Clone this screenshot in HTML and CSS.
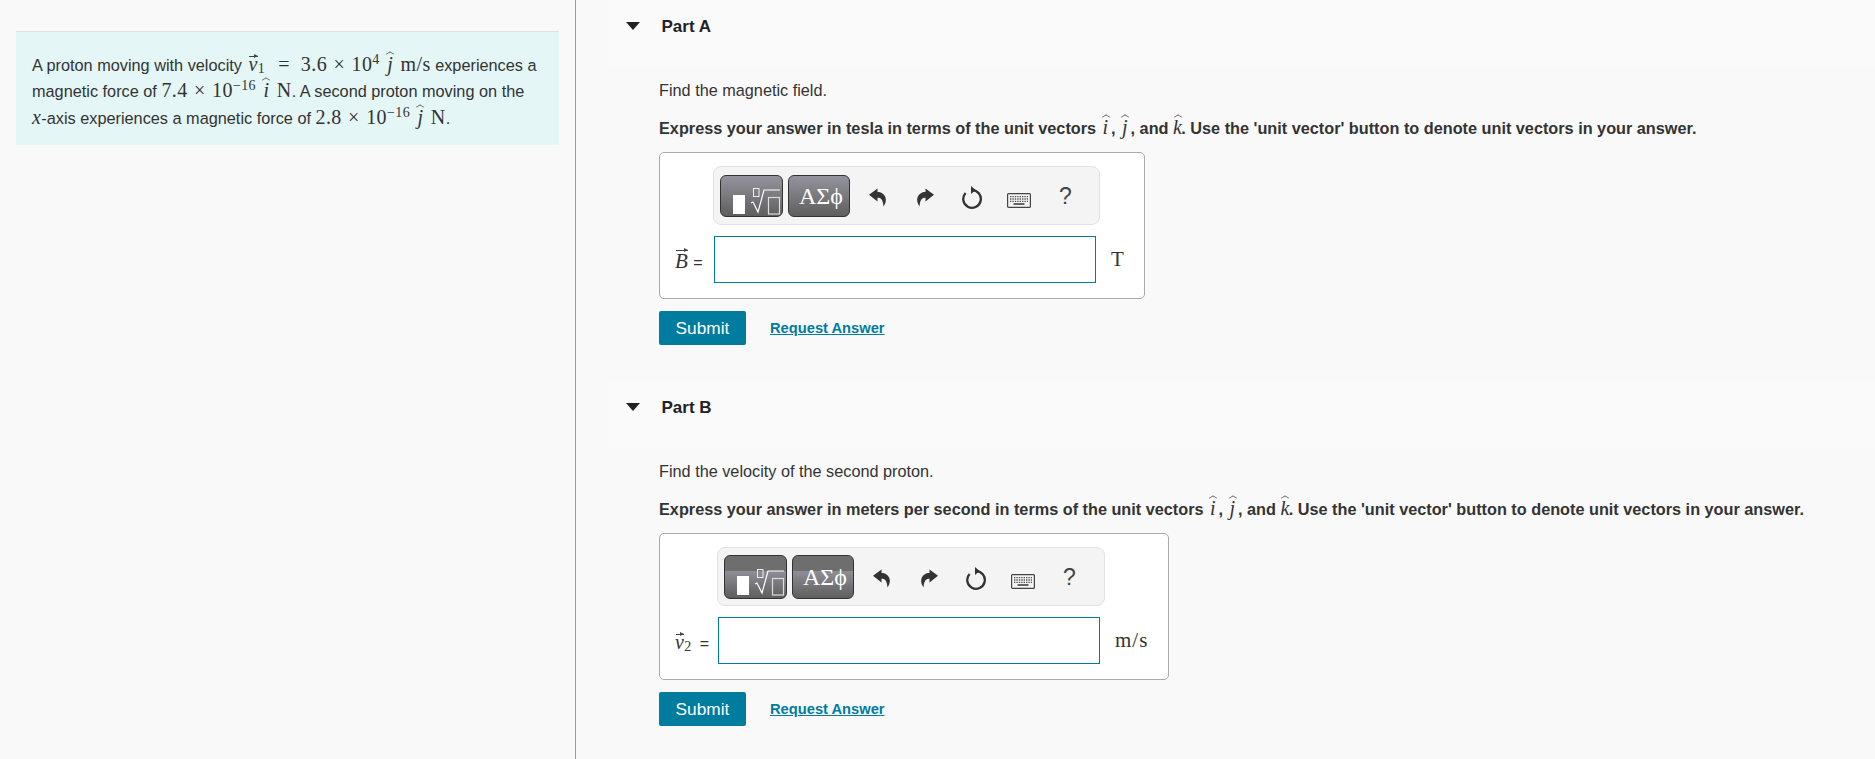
FILE: index.html
```html
<!DOCTYPE html>
<html>
    <head>
        <link rel="stylesheet" href="styles.css">
        <title>Part A and Part B</title>
    </head>
    <body>
        <svg class="icon-defs" width="0" height="0">
            <symbol id="undo" viewBox="0 0 18 19">
                <path d="M8.5 0.5 L0 6.7 L8.5 13.5 V9.8 C11.5 9.8 14 11 14.5 18.5 C16.5 15.5 17.5 12.5 16.5 9.5 C15.5 6 12 4 8.5 4 Z"/>
            </symbol>
            <symbol id="reset" viewBox="0 0 24 24">
                <path d="M12 4.2 A8.8 8.8 0 1 1 5.6 7" fill="none" stroke="#333" stroke-width="2.3"/>
                <path d="M11 0 L15.6 4 L11 8 Z"/>
            </symbol>
            <symbol id="keys" viewBox="0 0 24 15">
                <rect x="0.6" y="0.6" width="22.8" height="13.8" rx="1" fill="#f4f4f4" stroke="#444" stroke-width="1.2"/>
                <path d="M3 3.6 H21 M3 6 H21 M3 8.4 H21" stroke="#555" stroke-width="1.3" stroke-dasharray="1.4 1"/>
                <path d="M6.5 11 H17.5" stroke="#444" stroke-width="1.6"/>
            </symbol>
            <symbol id="templates" viewBox="0 0 62 41">
                <rect x="12" y="19" width="12" height="19" fill="#fff"/>
                <rect x="32.5" y="12.5" width="5.5" height="8" fill="none" stroke="#eee"/>
                <path d="M30 27 L32 26 L37 36 L43 14 H59" fill="none" stroke="#fff" stroke-width="1.2"/>
                <rect x="47.5" y="21.5" width="11" height="16.5" fill="none" stroke="#ddd" stroke-width="1.2"/>
            </symbol>
        </svg>

        <div class="page">
            <div class="left">
                <div class="statement">
                    A proton moving with velocity
                    <span class="m"><span class="vec first">v</span><span class="sb">1</span><span class="rel">=</span>3.6 × 10<sup>4</sup> <span class="hat">j</span> m/s</span>
                    experiences a magnetic force of
                    <span class="m">7.4 × 10<sup>−16</sup> <span class="hat">i</span> N</span>. A second proton moving on the
                    <span class="nowrap"><span class="m"><i>x</i></span>-axis</span> experiences a magnetic force of
                    <span class="m">2.8 × 10<sup>−16</sup> <span class="hat">j</span> N</span>.
                </div>
            </div>

            <div class="right">
                <div class="part">
                    <div class="part-head">
                        <span class="caret"></span>
                        <h2>Part A</h2>
                    </div>
                    <div class="part-body">
                        <p class="prompt">Find the magnetic field.</p>
                        <p class="instr">Express your answer in tesla in terms of the unit vectors <span class="m"><span class="hat">i</span></span>, <span class="m"><span class="hat">j</span></span>, and <span class="m"><span class="hat hat-k">k</span></span>. Use the 'unit vector' button to denote unit vectors in your answer.</p>
                        <div class="answer answer-a">
                            <div class="toolbar">
                                <div class="tool-btn tool-math"><svg width="62" height="41"><use href="#templates"/></svg></div>
                                <div class="tool-btn tool-greek">ΑΣϕ</div>
                                <span class="tool-slot"><svg class="tool-icon" width="18" height="19"><use href="#undo"/></svg></span>
                                <span class="tool-slot"><svg class="tool-icon flip" width="18" height="19"><use href="#undo"/></svg></span>
                                <span class="tool-slot"><svg class="tool-icon" width="24" height="24"><use href="#reset"/></svg></span>
                                <span class="tool-slot"><svg class="tool-icon keys" width="24" height="15"><use href="#keys"/></svg></span>
                                <span class="tool-slot help">?</span>
                            </div>
                            <div class="entry">
                                <span class="label m"><span class="vec big">B</span><span class="eq">=</span></span>
                                <div class="field"></div>
                                <span class="unit m">T</span>
                            </div>
                        </div>
                        <div class="actions">
                            <button class="submit">Submit</button>
                            <a class="request" href="#">Request Answer</a>
                        </div>
                    </div>
                </div>

                <div class="part part-b">
                    <div class="part-head">
                        <span class="caret"></span>
                        <h2>Part B</h2>
                    </div>
                    <div class="part-body">
                        <p class="prompt">Find the velocity of the second proton.</p>
                        <p class="instr">Express your answer in meters per second in terms of the unit vectors <span class="m"><span class="hat">i</span></span>, <span class="m"><span class="hat">j</span></span>, and <span class="m"><span class="hat hat-k">k</span></span>. Use the 'unit vector' button to denote unit vectors in your answer.</p>
                        <div class="answer answer-b">
                            <div class="toolbar">
                                <div class="tool-btn tool-math hover"><svg width="62" height="41"><use href="#templates"/></svg></div>
                                <div class="tool-btn tool-greek hover">ΑΣϕ</div>
                                <span class="tool-slot"><svg class="tool-icon" width="18" height="19"><use href="#undo"/></svg></span>
                                <span class="tool-slot"><svg class="tool-icon flip" width="18" height="19"><use href="#undo"/></svg></span>
                                <span class="tool-slot"><svg class="tool-icon" width="24" height="24"><use href="#reset"/></svg></span>
                                <span class="tool-slot"><svg class="tool-icon keys" width="24" height="15"><use href="#keys"/></svg></span>
                                <span class="tool-slot help">?</span>
                            </div>
                            <div class="entry">
                                <span class="label m"><span class="vec">v</span><span class="sb">2</span><span class="eq">=</span></span>
                                <div class="field"></div>
                                <span class="unit m">m/s</span>
                            </div>
                        </div>
                        <div class="actions">
                            <button class="submit">Submit</button>
                            <a class="request" href="#">Request Answer</a>
                        </div>
                    </div>
                </div>
            </div>
        </div>
    </body>
</html>
```

FILE: styles.css
```css
html, body {
    margin: 0;
    height: 759px;
    overflow: hidden;
}
body {
    color: #333;
    background-color: #f9f9f9;
    font-family: "Liberation Sans", sans-serif;
    font-size: 16.25px;
}
.icon-defs {
    display: block;
    height: 0;
}
.page {
    display: flex;
    height: 759px;
}
.left {
    box-sizing: border-box;
    flex-shrink: 0;
    width: 576px;
    padding: 31px 16px 0;
    border-right: 1px solid #9a9a9a;
}
.statement {
    box-sizing: border-box;
    height: 114px;
    padding: 20px 16px 0;
    font-size: 16.3px;
    line-height: 26.4px;
    border-top: 1px solid #d8e4e8;
    background-color: #e5f6f7;
}
.nowrap {
    white-space: nowrap;
}
.m {
    font-family: "Liberation Serif", serif;
    font-size: 20px;
    line-height: 1;
    letter-spacing: 0.4px;
    word-spacing: 1px;
}
.rel {
    margin: 0 11px 0 13px;
}
sup {
    font-size: 14px;
    line-height: 0;
    vertical-align: 7px;
}
.sb {
    font-size: 14px;
    vertical-align: -2px;
    line-height: 0;
}
.hat, .vec {
    position: relative;
    font-style: italic;
}
.hat {
    margin: 0 1px;
}
.vec.first {
    margin-left: 2px;
}
.instr .hat {
    margin: 0 2.5px 0 2px;
}
.instr .hat-k {
    margin: 0 -1px 0 0;
}
/* hat and arrow accents are drawn with borders, they sit over the letter */
.hat::before {
    content: "";
    position: absolute;
    left: 50%;
    top: -2px;
    width: 5px;
    height: 5px;
    margin-left: -3px;
    border-left: 1px solid #666;
    border-top: 1px solid #666;
    transform: scaleY(0.6) rotate(45deg);
}
.vec::before {
    content: "";
    position: absolute;
    left: 1px;
    right: 0;
    top: 3px;
    border-top: 1px solid #444;
}
.vec::after {
    content: "";
    position: absolute;
    right: 0;
    top: 1px;
    border-left: 4px solid #444;
    border-top: 2.5px solid transparent;
    border-bottom: 2.5px solid transparent;
}
.vec.big::before {
    top: 1px;
}
.vec.big::after {
    top: -1px;
}
.right {
    flex: 1;
    min-width: 0;
    padding-left: 32px;
}
.part-b {
    margin-top: 36px;
}
.part-head {
    box-sizing: border-box;
    display: flex;
    align-items: center;
    height: 68px;
    padding: 0 0 14px 18px;
    background-color: #fafafa;
}
.part-head h2 {
    margin: 0 0 0 21.5px;
    font-size: 17px;
    font-weight: bold;
    color: #222;
}
.caret {
    width: 0;
    height: 0;
    margin-bottom: 3px;
    border-top: 8px solid #222;
    border-left: 7px solid transparent;
    border-right: 7px solid transparent;
}
.part-body {
    padding: 12px 0 0 51px;
}
.prompt {
    margin: 0;
    line-height: 20px;
}
.instr {
    margin: 17px 0 0;
    line-height: 22px;
    font-weight: bold;
}
.instr .m {
    font-weight: normal;
}
.answer {
    box-sizing: border-box;
    margin-top: 13px;
    height: 147px;
    padding-top: 13px;
    background-color: #fff;
    border: 1px solid #aaa;
    border-radius: 5px;
}
.answer-a {
    width: 486px;
}
.answer-b {
    width: 510px;
}
.toolbar {
    box-sizing: border-box;
    display: flex;
    align-items: center;
    height: 59px;
    padding-left: 6px;
    background-color: #f4f4f4;
    border: 1px solid #e2e2e2;
    border-radius: 8px;
}
.answer-a .toolbar {
    width: 387px;
    margin-left: 53px;
}
.answer-b .toolbar {
    width: 388px;
    margin-left: 57px;
}
.tool-btn {
    box-sizing: border-box;
    flex-shrink: 0;
    height: 42px;
    border: 1px solid #333;
    border-radius: 6px;
    color: #fff;
    background-image: linear-gradient(#95949e, #5e5e5e);
}
.tool-btn.hover {
    height: 44px;
    line-height: 42px;
    background-image: linear-gradient(#6e6e6e 36%, #8f8e97 36%, #5e5e5e);
}
.tool-math {
    width: 63px;
    margin-right: 5px;
}
.tool-math svg {
    display: block;
}
.tool-math.hover svg {
    margin-top: 1px;
}
.tool-greek {
    width: 62px;
    margin-right: 4px;
    padding-left: 4px;
    text-align: center;
    font-family: "Liberation Serif", serif;
    font-size: 24px;
    line-height: 40px;
}
.tool-slot {
    display: flex;
    justify-content: center;
    width: 47px;
    padding-top: 4px;
}
.tool-icon {
    fill: #333;
}
.tool-icon.flip {
    transform: scaleX(-1);
}
.tool-icon.keys {
    margin-top: 6px;
}
.help {
    font-size: 23px;
    color: #444;
    padding-top: 2px;
}
.entry {
    display: flex;
    align-items: center;
    height: 47px;
    margin-top: 11px;
}
.label {
    box-sizing: border-box;
    flex-shrink: 0;
    padding: 3px 0 0 15px;
    white-space: nowrap;
}
.answer-a .label {
    width: 54px;
}
.answer-b .label {
    width: 58px;
}
.eq {
    margin-left: 5px;
    font-family: "Liberation Sans", sans-serif;
    font-size: 16px;
}
.answer-b .eq {
    margin-left: 8px;
}
.vec.big {
    font-size: 21px;
}
.field {
    box-sizing: border-box;
    width: 382px;
    height: 47px;
    background-color: #fff;
    border: 1px solid #007c9e;
}
.unit {
    margin-left: 15px;
    font-size: 21px;
    letter-spacing: 1px;
}
.actions {
    display: flex;
    align-items: center;
    margin-top: 12px;
}
.submit {
    width: 87px;
    height: 34px;
    padding: 0;
    color: #fff;
    font-family: "Liberation Sans", sans-serif;
    font-size: 17.3px;
    background-color: #007c9e;
    border: none;
    border-radius: 2px;
}
.request {
    margin-left: 24px;
    color: #007c9e;
    font-size: 14.7px;
    font-weight: bold;
}
```
